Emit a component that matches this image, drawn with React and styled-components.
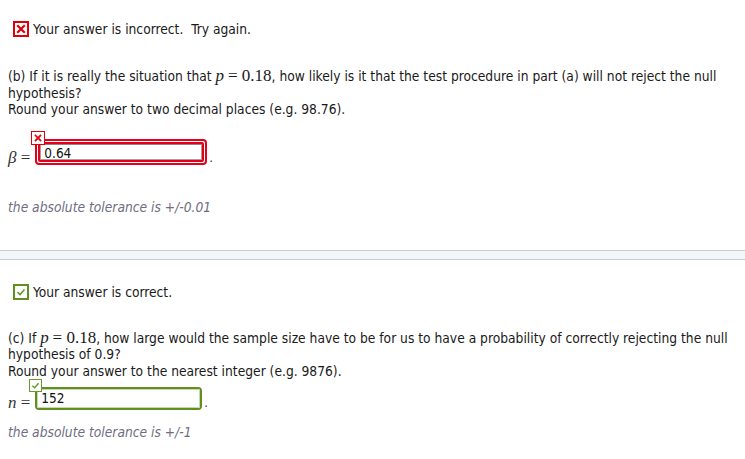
import React from 'react'
import styled, { createGlobalStyle } from 'styled-components'

const Global = createGlobalStyle`
  body {
    margin: 0;
    background: #ffffff;
    font-family: "DejaVu Sans Condensed", "Liberation Sans", sans-serif;
    font-size: 13.7px;
    color: #1a1a1a;
  }
`

const Page = styled.div`
  width: 745px;
  height: 459px;
  overflow: hidden;
`

const Section = styled.div`
  padding: 0 8px;
`

const Feedback = styled.div`
  display: flex;
  align-items: center;
  gap: 4px;
  padding-left: 13px;
  line-height: 16px;
  margin-top: ${p => p.$top || '0'};
`

const StatusIcon = styled.span`
  box-sizing: border-box;
  width: 16px;
  height: 16px;
  border: 2px solid ${p => (p.$ok ? '#5f8f1f' : '#e0000a')};
  display: inline-flex;
  align-items: center;
  justify-content: center;
  background: #fff;
`

const Question = styled.p`
  margin: ${p => p.$top || '0'} 0 0 0;
  line-height: 16.5px;
`

const Math = styled.span`
  font-family: "Liberation Serif", "DejaVu Serif", serif;
  font-size: 17px;
  line-height: 0;
`

const Var = styled.i`
  font-family: "Liberation Serif", "DejaVu Serif", serif;
  font-size: 17px;
  line-height: 0;
`

const AnswerRow = styled.div`
  display: flex;
  align-items: flex-end;
  margin-top: ${p => p.$top || '0'};
`

const Label = styled.span`
  font-family: "Liberation Serif", "DejaVu Serif", serif;
  font-size: 17px;
  line-height: 18px;
  margin-right: 5px;
  margin-bottom: -2px;
  color: #333;
`

const FieldWrap = styled.div`
  position: relative;
`

const WrongField = styled.div`
  box-sizing: border-box;
  width: 172px;
  height: 26px;
  border: 2px solid #e2001a;
  border-radius: 4px;
  padding: 1px;
  background: #fff;
  display: flex;
`

const WrongInner = styled.div`
  flex: 1;
  border: 2px solid #e2001a;
  border-radius: 2px;
  display: flex;
`

const RightField = styled.div`
  box-sizing: border-box;
  width: 167px;
  height: 23px;
  border: 2px solid #5f8f1f;
  border-radius: 4px;
  background: #fff;
  display: flex;
`

const Entry = styled.div`
  flex: 1;
  border: 1px solid ${p => (p.$ok ? '#c9d6b4' : '#a0a0a0')};
  border-top-color: ${p => (p.$ok ? '#c9d6b4' : '#888')};
  padding: 0 3px;
  font-size: 13.5px;
  line-height: ${p => (p.$ok ? '17px' : '16px')};
  color: #111;
`

const Badge = styled.span`
  position: absolute;
  left: ${p => p.$left};
  top: ${p => p.$top};
  box-sizing: border-box;
  width: ${p => p.$size};
  height: ${p => p.$size};
  border: 1px solid ${p => (p.$ok ? '#6b9a2a' : '#e0000a')};
  background: #fff;
  display: flex;
  align-items: center;
  justify-content: center;
  z-index: 2;
`

const Dot = styled.span`
  font-size: 13px;
  margin-left: 2px;
  padding-bottom: 1px;
  line-height: 13px;
  color: #334;
`

const Tolerance = styled.div`
  font-style: italic;
  color: #6e6e80;
  margin-top: ${p => p.$top || '0'};
  line-height: 16px;
`

const Separator = styled.div`
  margin-top: ${p => p.$top || '0'};
  height: 8px;
  border-top: 1px solid #c9cbd8;
  border-bottom: 1px solid #c9cbd8;
  background: #f3f7fa;
`

const Cross = ({ size = 10 }) => (
  <svg width={size} height={size} viewBox="0 0 10 10">
    <path d="M2 2 L8 8 M8 2 L2 8" stroke="#e0000a" strokeWidth="2.2" strokeLinecap="square" />
  </svg>
)

const Check = ({ size = 10 }) => (
  <svg width={size} height={size} viewBox="0 0 10 10">
    <path d="M1.5 5.2 L4 7.5 L8.5 2.5" stroke="#5f9a2a" strokeWidth="1.6" fill="none" />
  </svg>
)

export default function App() {
  return (
    <Page>
      <Global />
      <Feedback $top="21px">
        <StatusIcon><Cross /></StatusIcon>
        <span>Your answer is incorrect.&nbsp; Try again.</span>
      </Feedback>

      <Section>
        <Question $top="31px">
          (b) If it is really the situation that <Var>p</Var> <Math>= 0.18</Math>, how likely is it that the test procedure in part (a) will not reject the null hypothesis?
          <br />
          Round your answer to two decimal places (e.g. 98.76).
        </Question>

        <AnswerRow $top="21px">
          <Label><i>β</i> =</Label>
          <FieldWrap>
            <Badge $left="-4px" $top="-8px" $size="14px"><Cross size={8} /></Badge>
            <WrongField>
              <WrongInner>
                <Entry>0.64</Entry>
              </WrongInner>
            </WrongField>
          </FieldWrap>
          <Dot>.</Dot>
        </AnswerRow>

        <Tolerance $top="34px">the absolute tolerance is +/-0.01</Tolerance>
      </Section>

      <Separator $top="35px" />

      <Feedback $top="24px">
        <StatusIcon $ok><Check /></StatusIcon>
        <span>Your answer is correct.</span>
      </Feedback>

      <Section>
        <Question $top="30px">
          (c) If <Var>p</Var> <Math>= 0.18</Math>, how large would the sample size have to be for us to have a probability of correctly rejecting the null hypothesis of 0.9?
          <br />
          Round your answer to the nearest integer (e.g. 9876).
        </Question>

        <AnswerRow $top="8px">
          <Label><i>n</i> =</Label>
          <FieldWrap>
            <Badge $ok $left="-6px" $top="-8px" $size="13px"><Check size={9} /></Badge>
            <RightField>
              <Entry $ok>152</Entry>
            </RightField>
          </FieldWrap>
          <Dot>.</Dot>
        </AnswerRow>

        <Tolerance $top="14px">the absolute tolerance is +/-1</Tolerance>
      </Section>
    </Page>
  )
}
